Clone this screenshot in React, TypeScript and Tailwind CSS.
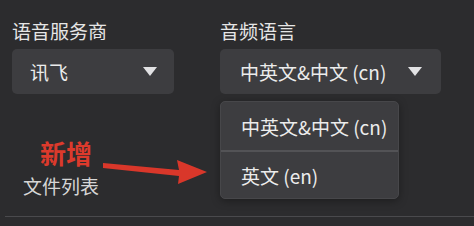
const FONT = "font-['Noto_Sans_CJK_SC','Noto_Sans',sans-serif]";

function Caret() {
  return (
    <svg width="14" height="10" viewBox="0 0 14 10" className="shrink-0">
      <polygon points="0,0 14,0 7,9" fill="#e2e2e4" />
    </svg>
  );
}

function Select({ value, width, padLeft, padRight }: { value: string; width: string; padLeft: string; padRight: string }) {
  return (
    <div
      className={`flex h-[45px] ${width} items-center justify-between rounded-[5px] bg-[#3d3d40] ${padLeft} ${padRight} text-[19px] leading-[19px] text-[#ececec]`}
    >
      <span>{value}</span>
      <Caret />
    </div>
  );
}

const OPTIONS = ["中英文&中文 (cn)", "英文 (en)"];

export default function App() {
  return (
    <div className={`relative flex h-[226px] w-[474px] flex-col overflow-hidden bg-[#2c2c2e] ${FONT}`}>
      <div className="flex gap-[46px] pl-[12px] pt-[21px]">
        <div className="flex flex-col">
          <div className="mb-[9px] text-[19px] leading-[19px] text-[#e6e6e6]">语音服务商</div>
          <Select value="讯飞" width="w-[162px]" padLeft="pl-[18px]" padRight="pr-[17px]" />
          <div className="mt-[46px] ml-[28px] text-[26px] leading-[26px] font-bold text-[#dc3a2c]">新增</div>
          <div className="mt-[10px] ml-[11px] text-[19px] leading-[19px] text-[#d6d6d6]">文件列表</div>
        </div>
        <div className="relative flex flex-col">
          <div className="mb-[9px] text-[19px] leading-[19px] text-[#e6e6e6]">音频语言</div>
          <Select value="中英文&中文 (cn)" width="w-[221px]" padLeft="pl-[20px]" padRight="pr-[19px]" />
          <div className="absolute left-0 top-[80px] w-[179px] overflow-hidden rounded-[5px] border border-[#47474a] bg-[#3d3d40] shadow-[0_2px_8px_rgba(0,0,0,0.35)]">
            {OPTIONS.map((option, i) => (
              <div
                key={option}
                className={`flex h-[48px] items-center pl-[20px] text-[19px] leading-[19px] text-[#ececec] ${i > 0 ? "border-t-2 border-[#535356]" : ""}`}
              >
                {option}
              </div>
            ))}
          </div>
        </div>
      </div>
      <svg className="absolute left-0 top-0" width="474" height="226" viewBox="0 0 474 226">
        <polygon
          points="103,163 179,170 177,160 207,172 178,184 179,176 103,168"
          fill="#d9372a"
        />
      </svg>
      <div className="mt-auto mb-[9px] ml-[5px] h-px bg-[#4a4a4d]" />
    </div>
  );
}
